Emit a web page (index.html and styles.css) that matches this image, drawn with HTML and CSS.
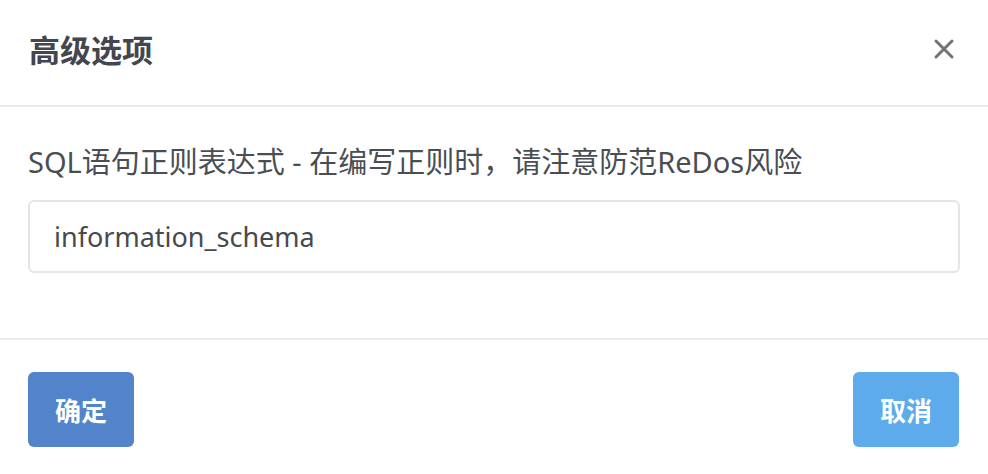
FILE: index.html
```html
<!DOCTYPE html>
<html lang="zh">
<head>
<meta charset="utf-8">
<title>高级选项</title>
<link rel="stylesheet" href="styles.css">
</head>
<body>
<div class="modal">
  <div class="modal-header">
    <h5 class="modal-title">高级选项</h5>
    <button class="close" type="button" aria-label="Close">
      <svg width="22" height="22" viewBox="0 0 22 22"><path d="M3 3 L19 19 M19 3 L3 19" stroke="#6f7378" stroke-width="3" stroke-linecap="round" fill="none"/></svg>
    </button>
  </div>
  <div class="modal-body">
    <label class="field-label">SQL语句正则表达式 - 在编写正则时，请注意防范ReDos风险</label>
    <input class="field-input" type="text" value="information_schema">
  </div>
  <div class="modal-footer">
    <button class="btn btn-ok" type="button">确定</button>
    <button class="btn btn-cancel" type="button">取消</button>
  </div>
</div>
</body>
</html>
```
FILE: styles.css
```css
* { box-sizing: border-box; }
html, body { margin: 0; padding: 0; background: #fff; }
body {
  font-family: "Noto Sans", "Noto Sans CJK SC", sans-serif;
  color: #495057;
  width: 988px;
  height: 474px;
  overflow: hidden;
}
.modal { display: flex; flex-direction: column; height: 474px; }
.modal-header {
  height: 107px;
  padding: 0 28px 0 29px;
  display: flex;
  align-items: center;
  justify-content: space-between;
  border-bottom: 2px solid #e9ecef;
}
.modal-title {
  margin: 0;
  font-size: 31px;
  font-weight: 700;
  color: #43474d;
  line-height: 1;
  padding-bottom: 4px;
}
.close {
  border: 0;
  background: none;
  padding: 0;
  margin-right: 5px;
  display: flex;
  margin-bottom: 8px;
}
.modal-body {
  padding: 35px 28px 65px 28px;
  display: flex;
  flex-direction: column;
  gap: 18px;
}
.field-label {
  font-size: 29px;
  line-height: 40px;
  color: #494e53;
}
.field-input {
  width: 100%;
  height: 73px;
  border: 2px solid #e2e5e9;
  border-radius: 6px;
  padding: 0 24px;
  font-family: "Noto Sans", "Noto Sans CJK SC", sans-serif;
  font-size: 27px;
  color: #464a4f;
  outline: none;
}
.modal-footer {
  border-top: 2px solid #e9ecef;
  padding: 32px 28px 0 28px;
  display: flex;
  justify-content: space-between;
  align-items: flex-start;
}
.btn {
  width: 106px;
  height: 75px;
  border: 0;
  border-radius: 6px;
  color: #fff;
  font-family: "Noto Sans CJK SC", sans-serif;
  font-size: 26px;
  font-weight: 700;
  padding: 0;
}
.btn-ok { background: #5283cb; }
.btn-cancel { background: #5eabeb; margin-right: 1px; }
```
